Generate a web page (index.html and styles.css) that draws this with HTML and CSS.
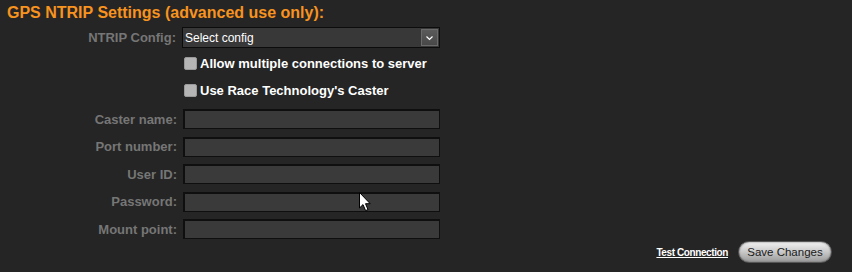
FILE: index.html
```html
<!DOCTYPE html>
<html lang="en">
  <head>
    <meta charset="UTF-8" />
    <meta name="viewport" content="width=device-width, initial-scale=1.0" />
    <title>GPS NTRIP Settings</title>
    <link rel="stylesheet" href="styles.css">
  </head>

  <body>
    <h2 class="title">GPS NTRIP Settings (advanced use only):</h2>

    <div class="form">
      <div class="row row-select">
        <label class="label">NTRIP Config:</label>
        <div class="select">
          <span>Select config</span>
          <span class="select-btn">
            <svg width="9" height="6" viewBox="0 0 9 6"><path d="M1.5 1.5 L4.5 4.5 L7.5 1.5" fill="none" stroke="#fff" stroke-width="1.2"/></svg>
          </span>
        </div>
      </div>

      <div class="row row-check first">
        <span class="label"></span>
        <label class="check"><span class="box"></span>Allow multiple connections to server</label>
      </div>
      <div class="row row-check">
        <span class="label"></span>
        <label class="check"><span class="box"></span>Use Race Technology's Caster</label>
      </div>

      <div class="row row-input first-input">
        <label class="label">Caster name:</label>
        <div class="input"></div>
      </div>
      <div class="row row-input">
        <label class="label">Port number:</label>
        <div class="input"></div>
      </div>
      <div class="row row-input">
        <label class="label">User ID:</label>
        <div class="input"></div>
      </div>
      <div class="row row-input">
        <label class="label">Password:</label>
        <div class="input"></div>
      </div>
      <div class="row row-input">
        <label class="label">Mount point:</label>
        <div class="input"></div>
      </div>
    </div>

    <div class="actions">
      <a href="#" class="test-link">Test Connection</a>
      <button class="save">Save Changes</button>
    </div>

    <!-- mouse pointer that was in the screenshot -->
    <svg class="cursor" width="13" height="20" viewBox="0 0 13 20">
      <path d="M0.5 0.5 L0.5 16 L4 12.6 L6.6 18.6 L9 17.6 L6.5 11.7 L11.2 11.7 Z" fill="#fff" stroke="#000" stroke-width="1"/>
    </svg>
  </body>
</html>
```

FILE: styles.css
```css
body {
  margin: 0;
  background-color: #252525;
  font-family: "Liberation Sans", Arial, sans-serif;
  width: 852px;
  height: 272px;
  position: relative;
  overflow: hidden;
}

.title {
  margin: 0;
  padding: 4px 0 0 7px;
  font-size: 16px;
  line-height: 18px;
  font-weight: bold;
  color: #f7931e;
}

.form {
  display: flex;
  flex-direction: column;
}

.row {
  display: flex;
  align-items: center;
  gap: 6px;
}

.label {
  width: 177px;
  text-align: right;
  font-size: 13px;
  font-weight: bold;
  color: #767676;
}

.row-select {
  margin-top: 5px;
  height: 21px;
}

.row-select .label {
  width: 176px;
}

.select {
  box-sizing: border-box;
  width: 258px;
  height: 21px;
  border: 1px solid #0c0c0c;
  background-color: #383838;
  display: flex;
  align-items: center;
  justify-content: space-between;
  padding: 0 1px 0 2px;
  color: #fff;
  font-size: 12px;
}

.select-btn {
  box-sizing: border-box;
  width: 17px;
  height: 17px;
  background: linear-gradient(#5a5a5a, #484848);
  border: 1px solid #6a6a6a;
  display: flex;
  align-items: center;
  justify-content: center;
}

.row-check {
  height: 16px;
  margin-top: 11px;
}

.row-check.first {
  margin-top: 7px;
}

.check {
  display: flex;
  align-items: center;
  gap: 3px;
  font-size: 13px;
  font-weight: bold;
  color: #fff;
  margin-left: 1px;
}

.box {
  box-sizing: border-box;
  width: 13px;
  height: 13px;
  border-radius: 2px;
  background-color: #b5b5b5;
  border: 1px solid #999;
}

.row-input {
  height: 20px;
  margin-top: 7.5px;
}

.row-input.first-input {
  margin-top: 11px;
}

.input {
  box-sizing: border-box;
  width: 257px;
  height: 20px;
  border: 2px solid #0f0f0f;
  border-width: 2px 1px 1px 2px;
  background-color: #3a3a3a;
}

.actions {
  display: flex;
  justify-content: flex-end;
  align-items: center;
  gap: 10px;
  padding-right: 20px;
  margin-top: 2px;
}

.test-link {
  font-size: 10px;
  color: #fff;
  text-decoration: underline;
  font-weight: bold;
  letter-spacing: -0.4px;
}

.save {
  width: 94px;
  height: 22px;
  border: 1px solid #555;
  border-radius: 11px;
  background: linear-gradient(#f2f2f2, #c8c8c8 50%, #9a9a9a);
  box-shadow: inset 0 0 2px #666;
  font-family: "Liberation Sans", Arial, sans-serif;
  font-size: 11.5px;
  color: #1a1a1a;
  padding: 0;
}

.cursor {
  position: absolute;
  left: 359px;
  top: 192px;
}
```
